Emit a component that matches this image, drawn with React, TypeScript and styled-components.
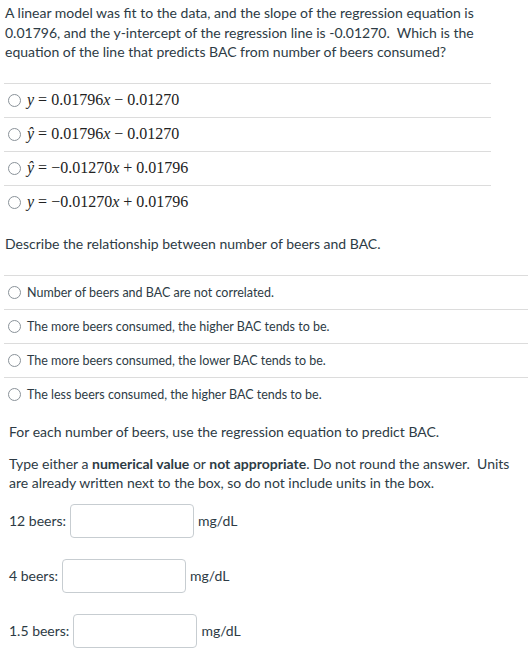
import styled, { createGlobalStyle } from "styled-components";

const GlobalStyle = createGlobalStyle`
  body {
    margin: 0;
    background: #ffffff;
    font-family: Lato, "Liberation Sans", sans-serif;
    color: #2d3b45;
  }
`;

const Page = styled.div`
  width: 528px;
  padding: 3px 0 0 5px;
  box-sizing: border-box;
`;

const Para = styled.p<{ indent?: number; gap?: number }>`
  margin: 0;
  padding-left: ${(p) => p.indent || 0}px;
  margin-top: ${(p) => p.gap || 0}px;
  font-size: 14px;
  line-height: 19.5px;
`;

const OptionList = styled.ul<{ wide?: boolean; gap: number }>`
  list-style: none;
  margin: ${(p) => p.gap}px 0 0 -1px;
  padding: 0;
  width: ${(p) => (p.wide ? "524px" : "487px")};
`;

const Option = styled.li`
  display: flex;
  align-items: center;
  gap: 6px;
  height: 34px;
  padding-left: 4px;
  border-top: 1px solid #dcdcdc;
  box-sizing: border-box;
`;

const Radio = styled.span`
  width: 11px;
  height: 11px;
  border-radius: 50%;
  border: 1px solid #8a9299;
  flex-shrink: 0;
`;

const Math = styled.span`
  font-family: "Liberation Serif", serif;
  font-size: 16px;
  color: #222;
  white-space: pre;
`;

const Var = styled.i`
  font-style: italic;
`;

const OptionText = styled.span`
  font-size: 12.5px;
`;

const Bold = styled.b`
  font-weight: 700;
`;

const AnswerRow = styled.div<{ gap: number }>`
  display: flex;
  align-items: center;
  gap: 4px;
  margin-top: ${(p) => p.gap}px;
  padding-left: 4px;
  font-size: 14px;
`;

const Box = styled.div`
  width: 122px;
  height: 32px;
  border: 1px solid #c7cdd1;
  border-radius: 4px;
  background: #fff;
`;

const questions = [
  { v: "y", expr: " = 0.01796", op: " − 0.01270" },
  { v: "ŷ", expr: " = 0.01796", op: " − 0.01270" },
  { v: "ŷ", expr: " = −0.01270", op: " + 0.01796" },
  { v: "y", expr: " = −0.01270", op: " + 0.01796" },
];

const relations = [
  "Number of beers and BAC are not correlated.",
  "The more beers consumed, the higher BAC tends to be.",
  "The more beers consumed, the lower BAC tends to be.",
  "The less beers consumed, the higher BAC tends to be.",
];

const answers = [
  { label: "12 beers:", gap: 11 },
  { label: "4 beers:", gap: 21 },
  { label: "1.5 beers:", gap: 21 },
];

export default function App() {
  return (
    <>
      <GlobalStyle />
      <Page>
        <Para>
          A linear model was fit to the data, and the slope of the regression equation is
          0.01796, and the y-intercept of the regression line is -0.01270.&nbsp; Which is the
          equation of the line that predicts BAC from number of beers consumed?
        </Para>
        <OptionList gap={21}>
          {questions.map((q, i) => (
            <Option key={i}>
              <Radio />
              <Math>
                <Var>{q.v}</Var>
                {q.expr}
                <Var>x</Var>
                {q.op}
              </Math>
            </Option>
          ))}
        </OptionList>
        <Para gap={15}>Describe the relationship between number of beers and BAC.</Para>
        <OptionList wide gap={22}>
          {relations.map((r) => (
            <Option key={r}>
              <Radio />
              <OptionText>{r}</OptionText>
            </Option>
          ))}
        </OptionList>
        <Para indent={4} gap={11}>
          For each number of beers, use the regression equation to predict BAC.
        </Para>
        <Para indent={4} gap={12}>
          Type either a <Bold>numerical value</Bold> or <Bold>not appropriate</Bold>. Do not round
          the answer.&nbsp; Units are already written next to the box, so do not include units in
          the box.
        </Para>
        {answers.map((a) => (
          <AnswerRow key={a.label} gap={a.gap}>
            <span>{a.label}</span>
            <Box />
            <span>mg/dL</span>
          </AnswerRow>
        ))}
      </Page>
    </>
  );
}
